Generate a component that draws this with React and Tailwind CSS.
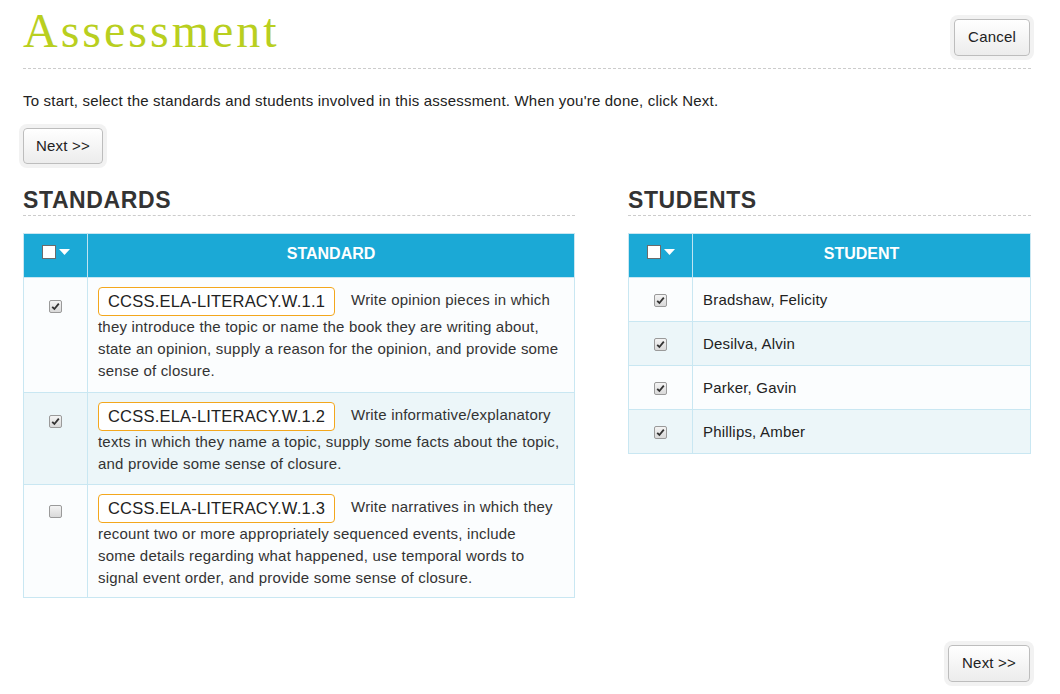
import React from "react";

const SANS = "font-['Liberation_Sans',Arial,sans-serif]";

function Btn({ children, className = "" }) {
  return (
    <button
      className={`${SANS} rounded-[4px] border border-[#bdbdbd] bg-gradient-to-b from-white to-[#ececec] text-[15px] tracking-[0.2px] text-[#222] shadow-[0_0_0_4px_#f2f2f2] ${className}`}
    >
      {children}
    </button>
  );
}

function Check({ checked }) {
  return (
    <span className="inline-flex h-[13px] w-[13px] items-center justify-center rounded-[2px] border border-[#9a9a9a] bg-gradient-to-b from-[#f4f4f4] to-[#d9d9d9]">
      {checked && (
        <svg width="9" height="9" viewBox="0 0 9 9">
          <path d="M1.2 4.8 L3.4 7 L7.8 1.6" fill="none" stroke="#333" strokeWidth="1.8" />
        </svg>
      )}
    </span>
  );
}

function HeadCheck() {
  return (
    <span className="inline-flex items-center gap-[3px]">
      <span className="inline-block h-[14px] w-[14px] border border-[#6b6b6b] bg-white" />
      <svg width="11" height="6" viewBox="0 0 11 6">
        <path d="M0 0 H11 L5.5 6 Z" fill="#fff" />
      </svg>
    </span>
  );
}

const standards = [
  {
    code: "CCSS.ELA-LITERACY.W.1.1",
    text: <>Write opinion pieces in which they introduce the topic or name the book they are writing about, state an opinion, supply a reason for the opinion, and provide some sense of closure.</>,
    checked: true,
    pb: "pb-[10px]",
  },
  {
    code: "CCSS.ELA-LITERACY.W.1.2",
    text: <>Write informative/explanatory texts in which they name a topic, supply some facts about the topic, and provide some sense of closure.</>,
    checked: true,
    pb: "pb-[9px]",
  },
  {
    code: "CCSS.ELA-LITERACY.W.1.3",
    text: (
      <>
        Write narratives in which they recount two or more appropriately sequenced events, include{" "}
        <span className="whitespace-nowrap">some details</span> regarding what happened, use temporal words to signal event order, and provide some sense of closure.
      </>
    ),
    checked: false,
    pb: "pb-[8px]",
  },
];

const students = ["Bradshaw, Felicity", "Desilva, Alvin", "Parker, Gavin", "Phillips, Amber"];

function SectionTitle({ children }) {
  return (
    <div className="border-b border-dashed border-[#cccccc] pb-[1px]">
      <h2 className={`${SANS} text-[23px] font-bold leading-[28px] tracking-[0.6px] text-[#333]`}>{children}</h2>
    </div>
  );
}

export default function App() {
  return (
    <div className={`${SANS} min-h-[694px] bg-white pl-[23px] pr-[29px] text-[#333]`}>
      <div className="flex h-[69px] items-start justify-between border-b border-dashed border-[#cccccc]">
        <h1 className="mt-[7px] font-['Liberation_Serif',serif] text-[48px] leading-[48px] tracking-[3px] text-[#b9cf1f]">
          Assessment
        </h1>
        <Btn className="mr-[1px] mt-[19px] h-[37px] px-[13px]">Cancel</Btn>
      </div>

      <p className="mt-[22px] text-[15px] leading-[20px] tracking-[0.2px] text-[#222]">
        To start, select the standards and students involved in this assessment. When you're done, click Next.
      </p>

      <Btn className="mt-[17px] h-[36px] px-[12px]">Next &gt;&gt;</Btn>

      <div className="mt-[22px] grid grid-cols-[552px_403px] justify-between">
        <div>
          <SectionTitle>STANDARDS</SectionTitle>
          <table className="mt-[17px] w-full border-collapse border border-[#c9e7f2]">
            <thead>
              <tr className="h-[44px] bg-[#1ba9d6] text-white">
                <th className="w-[64px] border-r border-[#bfe4f2] pb-[3px] align-middle">
                  <HeadCheck />
                </th>
                <th className="pb-[3px] text-[16px] font-bold">STANDARD</th>
              </tr>
            </thead>
            <tbody>
              {standards.map((s, i) => (
                <tr key={s.code} className={`${i % 2 ? "bg-[#ecf6f9]" : "bg-[#fbfdfe]"} border-t border-[#c9e7f2]`}>
                  <td className="border-r border-[#c9e7f2] pt-[16px] text-center align-top">
                    <Check checked={s.checked} />
                  </td>
                  <td className={`px-[10px] ${s.pb} pt-[9px] text-[15px] leading-[22px] tracking-[0.2px] text-[#333]`}>
                    <span className="mr-[16px] inline-block h-[29px] rounded-[4px] border border-[#f3a71d] bg-white px-[9px] align-middle text-[16.5px] leading-[27px] tracking-[0.2px] text-[#222]">
                      {s.code}
                    </span>
                    {s.text}
                  </td>
                </tr>
              ))}
            </tbody>
          </table>
        </div>

        <div>
          <SectionTitle>STUDENTS</SectionTitle>
          <table className="mt-[17px] w-full border-collapse border border-[#c9e7f2]">
            <thead>
              <tr className="h-[44px] bg-[#1ba9d6] text-white">
                <th className="w-[64px] border-r border-[#bfe4f2] pb-[3px] align-middle">
                  <HeadCheck />
                </th>
                <th className="pb-[3px] text-[16px] font-bold">STUDENT</th>
              </tr>
            </thead>
            <tbody>
              {students.map((n, i) => (
                <tr key={n} className={`${i % 2 ? "bg-[#ecf6f9]" : "bg-[#fbfdfe]"} h-[44px] border-t border-[#c9e7f2]`}>
                  <td className="border-r border-[#c9e7f2] text-center align-middle">
                    <Check checked />
                  </td>
                  <td className="px-[10px] text-[15px] leading-[21px] tracking-[0.2px] text-[#222]">{n}</td>
                </tr>
              ))}
            </tbody>
          </table>
        </div>
      </div>

      <div className="mt-[47px] flex justify-end">
        <Btn className="mr-[1px] h-[37px] px-[13px]">Next &gt;&gt;</Btn>
      </div>
    </div>
  );
}
